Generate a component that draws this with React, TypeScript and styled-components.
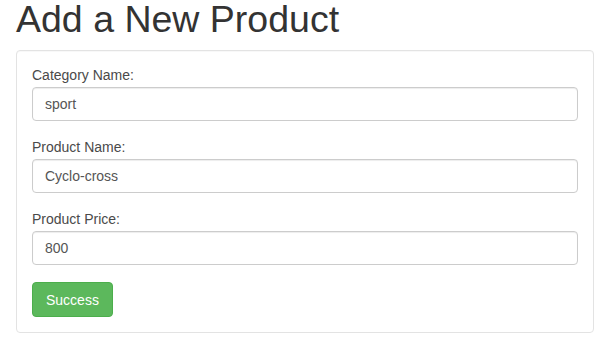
import React from 'react';
import styled, { createGlobalStyle } from 'styled-components';

const GlobalStyle = createGlobalStyle`
  html, body {
    margin: 0;
    padding: 0;
    background: #fff;
  }
  body {
    font-family: "Liberation Sans", Arial, sans-serif;
    font-size: 14px;
    line-height: 1.42857;
    color: #333;
  }
`;

const Page = styled.div`
  padding: 0 12px 0 16px;
`;

const Title = styled.h1`
  margin: 0 0 11px 0;
  font-size: 37.5px;
  font-weight: 400;
  line-height: 39px;
  color: #333;
`;

const Well = styled.form`
  border: 1px solid #e3e3e3;
  border-radius: 4px;
  padding: 14px 15px 15px 15px;
  box-shadow: inset 0 1px 1px rgba(0, 0, 0, 0.03);
`;

const Group = styled.div`
  margin-bottom: 16px;

  &:last-of-type {
    margin-bottom: 17px;
  }
`;

const Label = styled.label`
  display: block;
  margin-bottom: 2px;
  font-size: 14px;
  line-height: 20px;
  color: #4a4a4a;
`;

const Input = styled.input`
  display: block;
  box-sizing: border-box;
  width: 100%;
  height: 34px;
  padding: 6px 12px;
  font-family: inherit;
  font-size: 14px;
  color: #555;
  background: #fff;
  border: 1px solid #ccc;
  border-radius: 4px;
  box-shadow: inset 0 1px 1px rgba(0, 0, 0, 0.075);
`;

const Button = styled.button`
  display: block;
  height: 35px;
  padding: 6px 13px;
  font-family: inherit;
  font-size: 14px;
  color: #fff;
  background: #5cb85c;
  border: 1px solid #4cae4c;
  border-radius: 4px;
  cursor: pointer;
`;

const fields = [
  { label: 'Category Name:', value: 'sport' },
  { label: 'Product Name:', value: 'Cyclo-cross' },
  { label: 'Product Price:', value: '800' },
];

export default function App() {
  return (
    <Page>
      <GlobalStyle />
      <Title>Add a New Product</Title>
      <Well onSubmit={e => e.preventDefault()}>
        {fields.map(f => (
          <Group key={f.label}>
            <Label>{f.label}</Label>
            <Input defaultValue={f.value} />
          </Group>
        ))}
        <Button type="submit">Success</Button>
      </Well>
    </Page>
  );
}
